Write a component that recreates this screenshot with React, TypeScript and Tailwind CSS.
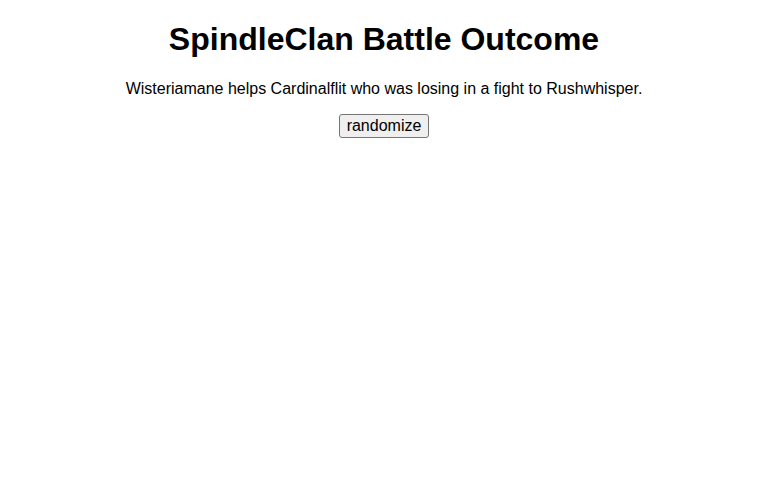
import { useState } from "react";

const names = [
  "Wisteriamane",
  "Cardinalflit",
  "Rushwhisper",
  "Emberstep",
  "Mosspelt",
  "Thornfur",
  "Ashfeather",
  "Briarheart",
];

function pick(list: string[], skip: string[]) {
  const pool = list.filter((n) => !skip.includes(n));
  return pool[Math.floor(Math.random() * pool.length)];
}

export default function App() {
  const [cats, setCats] = useState(["Wisteriamane", "Cardinalflit", "Rushwhisper"]);

  const randomize = () => {
    const a = pick(names, []);
    const b = pick(names, [a]);
    const c = pick(names, [a, b]);
    setCats([a, b, c]);
  };

  return (
    <div className="min-h-[480px] bg-white text-center text-black font-['Liberation_Sans',Arial,sans-serif] text-base leading-[normal]">
      <h1 className="text-[32px] font-bold leading-[normal] pt-[21.44px] mb-[21.44px]">
        SpindleClan Battle Outcome
      </h1>
      <p className="mb-4">
        {cats[0]} helps {cats[1]} who was losing in a fight to {cats[2]}.
      </p>
      <button
        onClick={randomize}
        className="bg-[#efefef] border border-[#767676] rounded-[3px] px-[7px] py-[2px] text-base leading-[normal] text-black hover:bg-[#e5e5e5]"
      >
        randomize
      </button>
    </div>
  );
}
